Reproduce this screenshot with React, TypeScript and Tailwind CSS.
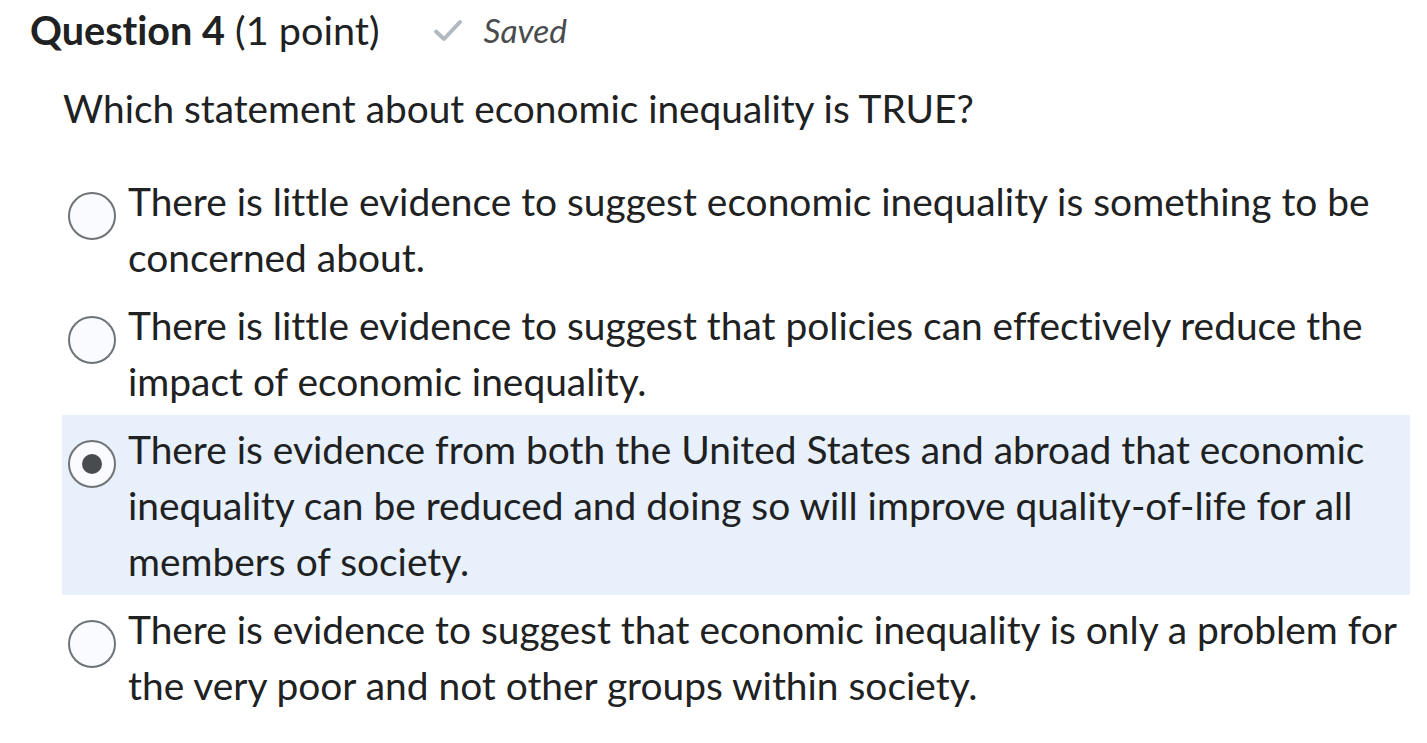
import React, { useState } from "react"

type Choice = {
  id: string
  text: string
}

const choices: Choice[] = [
  { id: "a", text: "There is little evidence to suggest economic inequality is something to be concerned about." },
  { id: "b", text: "There is little evidence to suggest that policies can effectively reduce the impact of economic inequality." },
  {
    id: "c",
    text: "There is evidence from both the United States and abroad that economic inequality can be reduced and doing so will improve quality-of-life for all members of society.",
  },
  { id: "d", text: "There is evidence to suggest that economic inequality is only a problem for the very poor and not other groups within society." },
]

const CheckMark = () => (
  <svg width="30" height="24" viewBox="0 0 30 24" fill="none" className="mt-[2px]">
    <path d="M3 12.5 L11 20 L27 3" stroke="#b2babf" strokeWidth="4" strokeLinecap="round" strokeLinejoin="round" />
  </svg>
)

const App: React.FC = () => {
  const [picked, setPicked] = useState<string>("c")

  return (
    <div className="min-h-screen bg-white text-[#202122] font-['Lato','Open_Sans',sans-serif] [font-variant-ligatures:none]">
      {/* Header */}
      <div className="flex items-center pl-[30px] pt-[2px] h-[58px]">
        <h2 className="text-[39.6px] leading-[56px]">
          <span className="font-bold">Question 4</span> (1 point)
        </h2>
        <div className="flex items-center ml-[54px] gap-[20px] text-[#494c4e]">
          <CheckMark />
          <span className="italic text-[33.5px]">Saved</span>
        </div>
      </div>

      {/* Question text */}
      <p className="pl-[63px] mt-[22px] text-[38.8px] leading-[56px]">
        Which statement about economic inequality is TRUE?
      </p>

      {/* Choices */}
      <div className="mt-[31px] ml-[62px] w-[1348px] flex flex-col">
        {choices.map((c) => {
          const selected = picked === c.id
          return (
            <label
              key={c.id}
              onClick={() => setPicked(c.id)}
              className={
                selected
                  ? "flex items-start gap-[12px] px-[6px] py-[6px] bg-[#e8f0fb] cursor-pointer"
                  : "flex items-start gap-[12px] px-[6px] py-[6px] cursor-pointer"
              }
            >
              <span className="shrink-0 mt-[19px] w-[48px] h-[48px] rounded-full border-2 border-[#6e7376] bg-[#f9fbff] flex items-center justify-center">
                {selected && <span className="w-[20px] h-[20px] rounded-full bg-[#494c4e]" />}
              </span>
              <span className="text-[38.9px] leading-[56px]">{c.text}</span>
            </label>
          )
        })}
      </div>
    </div>
  )
}

export default App
